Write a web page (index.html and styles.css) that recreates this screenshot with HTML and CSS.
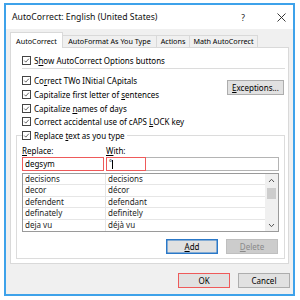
FILE: index.html
```html
<!DOCTYPE html>
<html>
<head>
<meta charset="utf-8">
<link rel="stylesheet" href="styles.css">
</head>
<body>
<div class="window">
  <div class="titlebar">
    <span class="title">AutoCorrect: English (United States)</span>
    <span class="help">?</span>
    <span class="close"><svg width="9" height="9" viewBox="0 0 9 9"><path d="M0.5 0.5L8.5 8.5M8.5 0.5L0.5 8.5" stroke="#222" stroke-width="0.9" fill="none"/></svg></span>
  </div>
  <div class="body">
    <div class="tabs">
      <div class="tab active t1">AutoCorrect</div>
      <div class="tab t2">AutoFormat As You Type</div>
      <div class="tab t3">Actions</div>
      <div class="tab t4">Math AutoCorrect</div>
    </div>
    <div class="panel">
      <div class="check top"><span class="box"><svg width="9" height="9" viewBox="0 0 9 9"><path d="M1.6 4.6L3.6 6.6L7.5 2.2" stroke="#222" stroke-width="0.9" fill="none"/></svg></span><span>S<u>h</u>ow AutoCorrect Options buttons</span></div>
      <div class="sep"></div>
      <div class="opts">
        <div class="checks">
          <div class="check"><span class="box"><svg width="9" height="9" viewBox="0 0 9 9"><path d="M1.6 4.6L3.6 6.6L7.5 2.2" stroke="#222" stroke-width="0.9" fill="none"/></svg></span><span>Co<u>r</u>rect TWo INitial CApitals</span></div>
          <div class="check"><span class="box"><svg width="9" height="9" viewBox="0 0 9 9"><path d="M1.6 4.6L3.6 6.6L7.5 2.2" stroke="#222" stroke-width="0.9" fill="none"/></svg></span><span>Capitalize first letter of <u>s</u>entences</span></div>
          <div class="check"><span class="box"><svg width="9" height="9" viewBox="0 0 9 9"><path d="M1.6 4.6L3.6 6.6L7.5 2.2" stroke="#222" stroke-width="0.9" fill="none"/></svg></span><span>Capitalize <u>n</u>ames of days</span></div>
          <div class="check"><span class="box"><svg width="9" height="9" viewBox="0 0 9 9"><path d="M1.6 4.6L3.6 6.6L7.5 2.2" stroke="#222" stroke-width="0.9" fill="none"/></svg></span><span>Correct accidental use of cAPS <u>L</u>OCK key</span></div>
        </div>
        <div class="btn exc"><u>E</u>xceptions...</div>
      </div>
      <fieldset class="group">
        <legend class="check legend"><span class="box"><svg width="9" height="9" viewBox="0 0 9 9"><path d="M1.6 4.6L3.6 6.6L7.5 2.2" stroke="#222" stroke-width="0.9" fill="none"/></svg></span><span>Replace <u>t</u>ext as you type</span></legend>
        <div class="labels"><span class="lbl-replace"><u>R</u>eplace:</span><span><u>W</u>ith:</span></div>
        <div class="inputs">
          <div class="field replace">degsym</div>
          <div class="field with"><span class="deg">°</span><span class="caret"></span><span class="mark"></span></div>
        </div>
        <div class="table">
          <div class="rows">
            <div class="row"><span class="c1">decisions</span><span class="c2">decisions</span></div>
            <div class="row"><span class="c1">decor</span><span class="c2">décor</span></div>
            <div class="row"><span class="c1">defendent</span><span class="c2">defendant</span></div>
            <div class="row"><span class="c1">definately</span><span class="c2">definitely</span></div>
            <div class="row"><span class="c1">deja vu</span><span class="c2">déjà vu</span></div>
          </div>
          <div class="scroll">
            <svg class="arr" width="7" height="5" viewBox="0 0 7 5"><path d="M1 4L3.5 1.3L6 4" stroke="#555" stroke-width="1" fill="none"/></svg>
            <div class="thumb"></div>
            <div class="track"></div>
            <svg class="arr" width="7" height="5" viewBox="0 0 7 5"><path d="M1 1L3.5 3.7L6 1" stroke="#555" stroke-width="1" fill="none"/></svg>
          </div>
        </div>
        <div class="actions">
          <div class="btn add"><u>A</u>dd</div>
          <div class="btn disabled"><u>D</u>elete</div>
        </div>
      </fieldset>
    </div>
    <div class="footer">
      <div class="btn ok">OK</div>
      <div class="btn">Cancel</div>
    </div>
  </div>
</div>
</body>
</html>
```

FILE: styles.css
```css
* { box-sizing: border-box; }
html, body { margin: 0; padding: 0; background: #fff; }
body {
  font-family: "Noto Sans", "Open Sans", sans-serif;
  font-size: 8px;
  color: #000;
}
u { text-decoration-thickness: 0.6px; text-underline-offset: 1px; }

.window {
  margin: 3px 0 0 4px;
  width: 291px;
  height: 293px;
  border: 2px solid #3ea2ea;
  background: #f0f0f0;
  display: flex;
  flex-direction: column;
}

.titlebar {
  height: 24px;
  background: #fff;
  display: flex;
  align-items: center;
  padding-left: 6px;
}
.title { flex: 1; font-size: 8.7px; color: #111; }
.help { width: 12px; text-align: center; margin-right: 20px; font-size: 8.5px; color: #222; }
.close { width: 24px; display: flex; justify-content: center; }

.body {
  flex: 1;
  padding: 3px 4px 0 4px;
  display: flex;
  flex-direction: column;
}

.tabs { display: flex; align-items: flex-end; height: 15px; font-size: 7.2px; }
.tab {
  height: 12px;
  line-height: 11px;
  border: 1px solid #d9d9d9;
  border-bottom: none;
  margin-left: -1px;
  text-align: center;
  background: #f0f0f0;
  white-space: nowrap;
}
.tab.active {
  margin-left: 0;
  height: 16px;
  padding-top: 2px;
  line-height: 13px;
  margin-bottom: -1px;
  background: #fff;
  position: relative;
  z-index: 1;
}
.t1 { width: 53px; }
.t2 { width: 95px; }
.t3 { width: 34px; }
.t4 { width: 69px; }

.panel {
  width: 279px;
  height: 217px;
  background: #fff;
  border: 1px solid #d9d9d9;
  padding: 6px 3px 4px 5px;
  display: flex;
  flex-direction: column;
}

.check {
  display: flex;
  align-items: center;
  height: 13.6px;
  white-space: nowrap;
}
.check.top { margin-left: 6px; }
.box {
  width: 9px;
  height: 9px;
  border: 1px solid #444;
  margin-right: 3px;
  display: flex;
  align-items: center;
  justify-content: center;
  background: #fff;
  flex: none;
}
.box svg { width: 7px; height: 7px; }

.sep {
  height: 1px;
  background: #dcdcdc;
  margin: 0.5px 0 5.5px 6px;
}

.opts { display: flex; justify-content: space-between; padding-left: 6px; }
.btn {
  height: 15px;
  line-height: 13px;
  border: 1px solid #adadad;
  background: #e1e1e1;
  text-align: center;
  white-space: nowrap;
}
.exc { width: 57px; margin-top: 6px; margin-right: 1px; }

.group {
  margin: 0;
  padding: 0 5px 4px 5px;
  border: 1px solid #dcdcdc;
  min-width: 0;
  flex: 1;
  display: flex;
  flex-direction: column;
}
.legend { padding: 0 2px 0 0; }

.labels { display: flex; height: 12px; line-height: 12px; margin-top: 3px; }
.lbl-replace { width: 84px; }

.inputs { display: flex; gap: 2px; height: 14px; }
.field {
  height: 14px;
  border: 1px solid #b4b4b4;
  background: #fff;
  line-height: 12px;
  padding-left: 2px;
  position: relative;
}
.field.replace { width: 82px; border-color: #ee5a5a; }
.field.with { flex: 1; display: flex; align-items: flex-start; }
.deg { font-size: 7px; line-height: 10px; }
.caret { width: 1px; height: 9px; background: #000; margin-top: 1.5px; }
.mark {
  position: absolute;
  left: -1px;
  top: -1px;
  width: 40px;
  height: 14px;
  border: 1px solid #ee5a5a;
}

.table {
  margin-top: 2px;
  height: 59px;
  border: 1px solid #9a9a9a;
  background: #fff;
  display: flex;
}
.rows { flex: 1; }
.row {
  display: flex;
  height: 11.4px;
  line-height: 10.4px;
  border-bottom: 1px solid #e6e6e6;
  color: #1e1e1e;
}
.row:last-child { border-bottom: none; }
.c1 { width: 83px; padding-left: 2px; border-right: 1px solid #e6e6e6; }
.c2 { padding-left: 2px; }
.scroll {
  width: 13px;
  background: #f0f0f0;
  display: flex;
  flex-direction: column;
  align-items: center;
  padding: 4px 0 3px;
}
.thumb { width: 9px; height: 11px; background: #cdcdcd; margin-top: 5px; }
.track { flex: 1; }

.actions { display: flex; justify-content: flex-end; gap: 8px; margin-top: 7px; padding-right: 1px; }
.actions .btn { width: 52px; height: 15px; }
.btn.add { border: 1px solid #2a78c8; box-shadow: inset 0 0 0 0.5px #2a78c8; }
.btn.disabled { background: #cccccc; border-color: #bfbfbf; color: #8a8a8a; }

.footer {
  display: flex;
  justify-content: flex-end;
  gap: 8px;
  padding-top: 9px;
  margin-right: -1px;
}
.footer .btn { width: 52px; }
.btn.ok { border: 1px solid #ee5a5a; }
```
